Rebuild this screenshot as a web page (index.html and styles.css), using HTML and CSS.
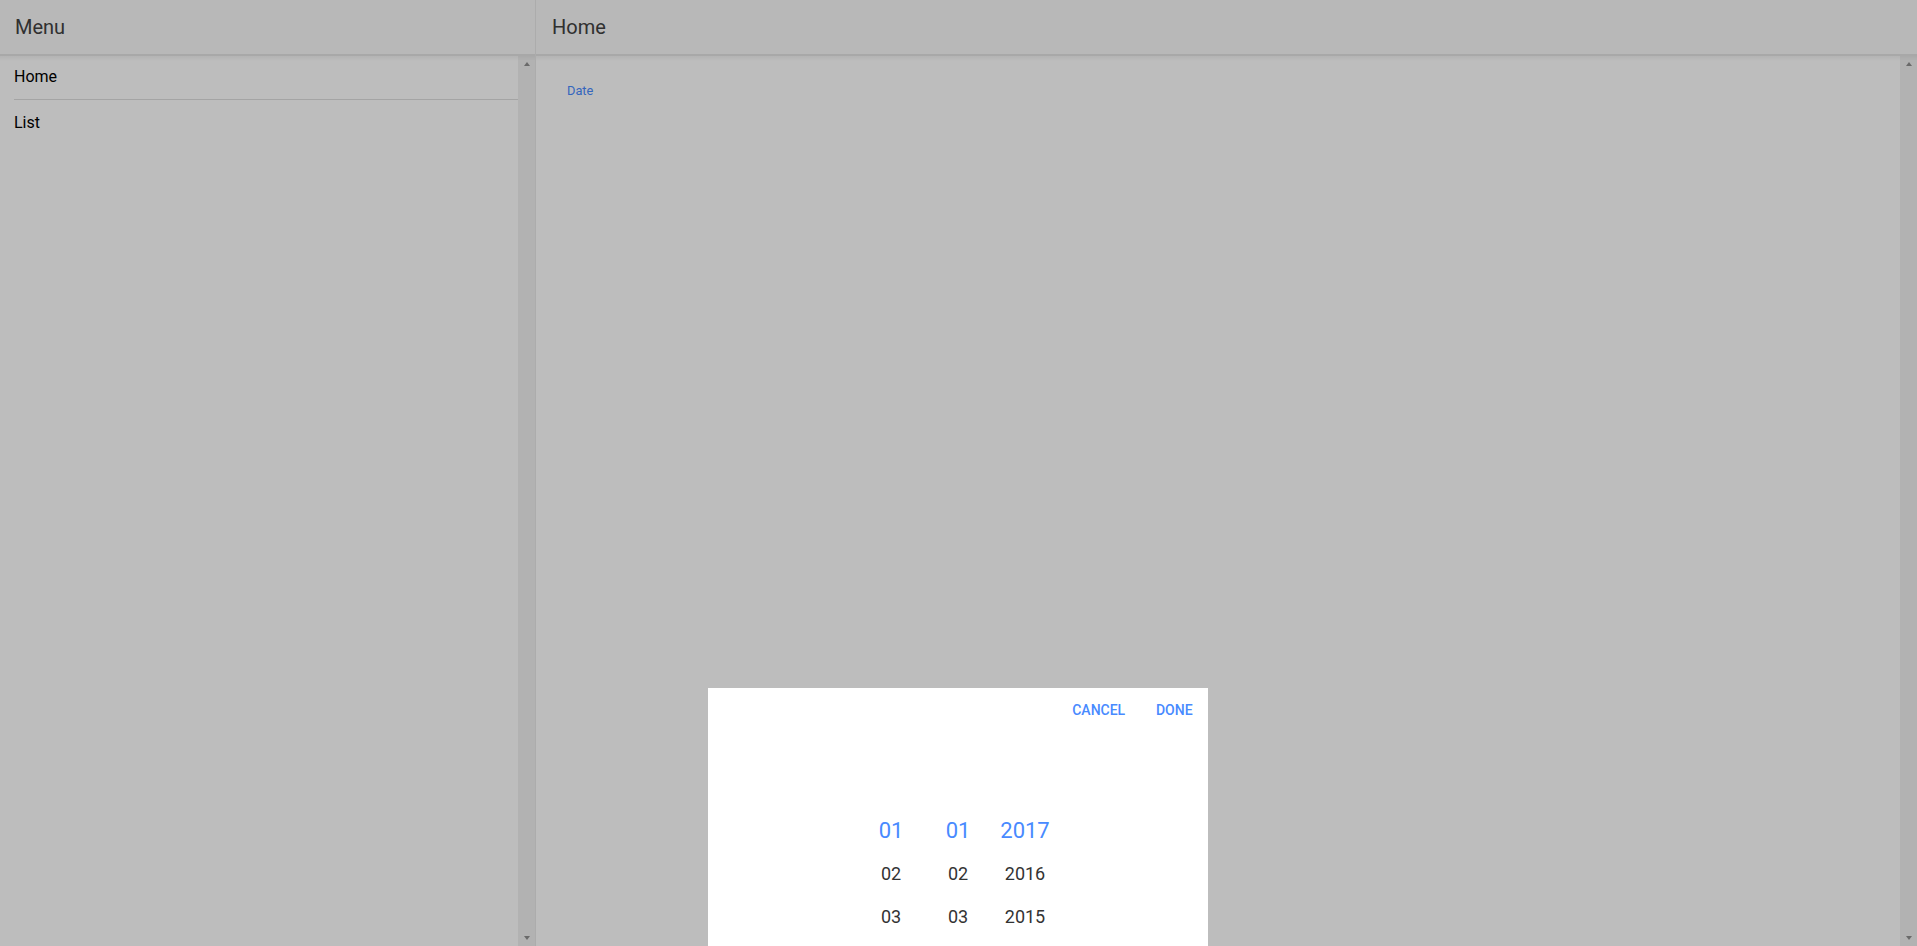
FILE: index.html
```html
<!DOCTYPE html>
<html lang="en">
<head>
<meta charset="utf-8">
<title>Home</title>
<link rel="stylesheet" href="styles.css">
</head>
<body>
<div class="app">
  <aside class="menu">
    <header class="toolbar"><div class="title">Menu</div></header>
    <div class="pane-body">
      <nav class="list">
        <div class="item"><span class="item-inner">Home</span></div>
        <div class="item"><span class="item-inner last">List</span></div>
      </nav>
      <div class="scrollbar"><span class="arrow up"></span><span class="arrow down"></span></div>
    </div>
  </aside>
  <main class="main">
    <header class="toolbar"><div class="title">Home</div></header>
    <div class="pane-body">
      <section class="content">
        <div class="field"><label class="field-label">Date</label></div>
      </section>
      <div class="scrollbar"><span class="arrow up"></span><span class="arrow down"></span></div>
    </div>
  </main>
</div>
<div class="backdrop"></div>
<div class="picker">
  <div class="picker-toolbar">
    <button class="picker-btn">Cancel</button>
    <button class="picker-btn">Done</button>
  </div>
  <div class="picker-columns">
    <div class="picker-col">
      <div class="opt selected">01</div>
      <div class="opt">02</div>
      <div class="opt">03</div>
    </div>
    <div class="picker-col">
      <div class="opt selected">01</div>
      <div class="opt">02</div>
      <div class="opt">03</div>
    </div>
    <div class="picker-col">
      <div class="opt selected">2017</div>
      <div class="opt">2016</div>
      <div class="opt">2015</div>
    </div>
  </div>
</div>
</body>
</html>
```

FILE: styles.css
```css
* { box-sizing: border-box; }
html, body { margin: 0; padding: 0; height: 100%; overflow: hidden; }
body {
  font-family: Roboto, "Liberation Sans", sans-serif;
  background: #fff;
  color: #000;
}
.app {
  display: flex;
  height: 100vh;
}
.menu {
  width: 536px;
  flex: none;
  border-right: 1px solid #e8e8e8;
  display: flex;
  flex-direction: column;
  background: #fff;
}
.main {
  flex: 1;
  display: flex;
  flex-direction: column;
  background: #fff;
  min-width: 0;
}
.toolbar {
  position: relative;
  height: 56px;
  flex: none;
  background: #f8f8f8;
  border-bottom: 2px solid #e3e3e3;
  display: flex;
  align-items: center;
  z-index: 1;
}
.toolbar::after {
  content: "";
  position: absolute;
  left: 0;
  right: 0;
  top: 100%;
  margin-top: 2px;
  height: 5px;
  background: linear-gradient(rgba(0,0,0,0.05), rgba(0,0,0,0));
}
.menu .toolbar { padding-left: 15px; }
.main .toolbar { padding-left: 16px; }
.title {
  font-size: 20px;
  font-weight: 400;
  color: #424242;
  line-height: 24px;
}
.pane-body {
  flex: 1;
  display: flex;
  min-height: 0;
}
.list { flex: 1; }
.item {
  padding-left: 14px;
}
.item-inner {
  display: flex;
  align-items: center;
  height: 44px;
  padding-bottom: 2px;
  font-size: 16px;
  color: #000;
  border-bottom: 1px solid #dedede;
}
.item-inner.last { border-bottom: none; height: 44px; padding-bottom: 0; }
.scrollbar {
  width: 17px;
  flex: none;
  background: #f1f1f1;
  display: flex;
  flex-direction: column;
  justify-content: space-between;
  align-items: center;
  padding: 6px 0;
}
.arrow {
  width: 0;
  height: 0;
  border-left: 3.5px solid transparent;
  border-right: 3.5px solid transparent;
}
.arrow.up { border-bottom: 4px solid #8f8f8f; }
.arrow.down { border-top: 4px solid #8f8f8f; }
.content {
  flex: 1;
  padding: 16px;
}
.field {
  padding: 11px 0 0 15px;
}
.field-label {
  display: block;
  font-size: 12.8px;
  line-height: 15px;
  color: #488aff;
}
.backdrop {
  position: fixed;
  inset: 0;
  background: rgba(0,0,0,0.26);
  z-index: 10;
}
.picker {
  position: fixed;
  bottom: 0;
  left: calc(50% - 250.5px);
  width: 500px;
  height: 258px;
  background: #fff;
  z-index: 11;
  display: flex;
  flex-direction: column;
  overflow: hidden;
}
.picker-toolbar {
  height: 44px;
  flex: none;
  display: flex;
  justify-content: flex-end;
}
.picker-btn {
  background: none;
  border: none;
  margin: 0;
  padding: 0 15.4px;
  height: 44px;
  font-family: Roboto, "Liberation Sans", sans-serif;
  font-size: 14px;
  font-weight: 500;
  text-transform: uppercase;
  color: #488aff;
}
.picker-columns {
  display: flex;
  justify-content: center;
  padding-top: 77px;
}
.picker-col {
  width: 67px;
}
.opt {
  height: 43px;
  line-height: 43px;
  text-align: center;
  font-size: 18px;
  color: #333;
}
.opt.selected {
  font-size: 22px;
  color: #488aff;
}
```
